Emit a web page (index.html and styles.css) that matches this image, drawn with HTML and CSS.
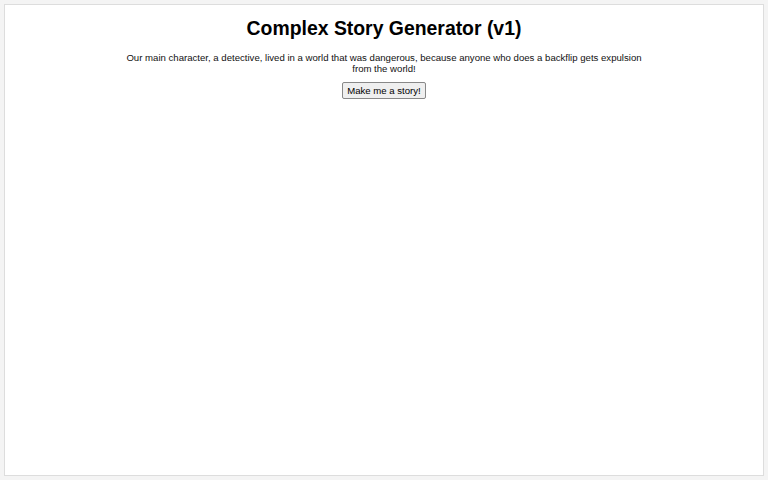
FILE: index.html
```html
<!DOCTYPE html>
<html lang="en">
<head>
<meta charset="UTF-8">
<meta name="viewport" content="width=device-width, initial-scale=1.0">
<title>Complex Story Generator</title>
<link rel="stylesheet" href="styles.css">
</head>
<body>

<div class="container">
  <h1>Complex Story Generator (v1)</h1>
  <p class="story" id="story">Our main character, a detective, lived in a world that was dangerous, because anyone who does a backflip gets expulsion from the world!</p>
  <button type="button" class="generate" id="generate">Make me a story!</button>
</div>

</body>
</html>
```

FILE: styles.css
```css
body {
  font-family: 'Liberation Sans', Arial, sans-serif;
  margin: 0;
  padding: 4px;
  background-color: #f4f4f4;
  color: #000;
  box-sizing: border-box;
  height: 480px;
}
.container {
  background-color: #fff;
  border: 1px solid #ddd;
  height: 100%;
  box-sizing: border-box;
  text-align: center;
  padding-top: 11px;
}
h1 {
  font-size: 19.4px;
  line-height: 24px;
  margin: 0 0 12px;
}
.story {
  font-size: 9.6px;
  line-height: 11px;
  max-width: 520px;
  margin: 0 auto 6px;
  color: #111;
}
.generate {
  font-family: 'Liberation Sans', Arial, sans-serif;
  font-size: 9.6px;
  line-height: 11px;
  padding: 2px 4px;
  background-color: #efefef;
  border: 1px solid #888;
  border-radius: 2px;
  color: #000;
}
```
